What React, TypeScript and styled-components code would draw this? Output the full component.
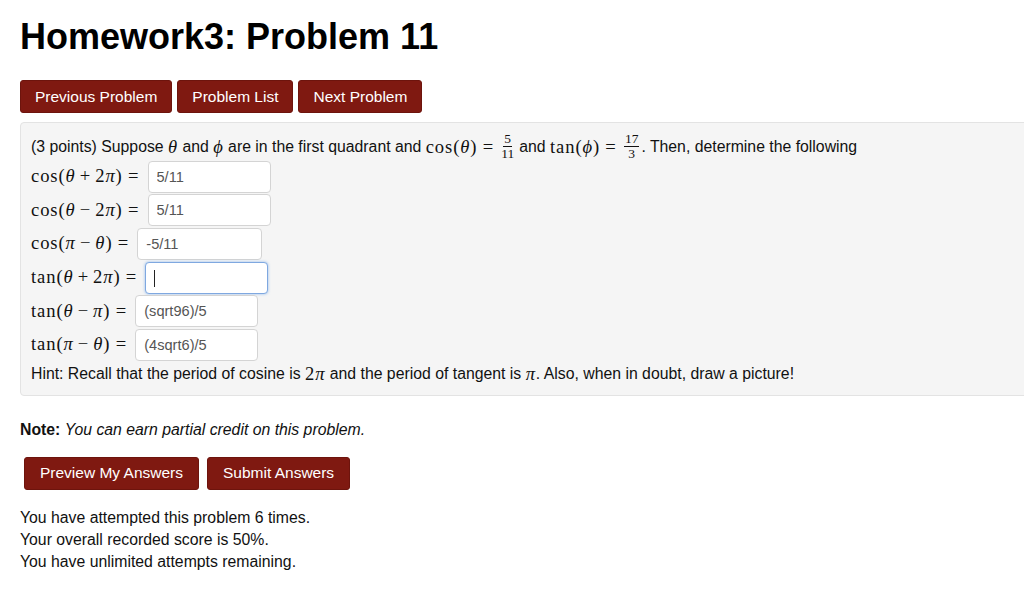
import React from 'react';
import styled, { createGlobalStyle, css } from 'styled-components';

const GlobalStyle = createGlobalStyle`
  html, body {
    margin: 0;
    padding: 0;
    background: #ffffff;
    overflow: hidden;
  }
  body {
    font-family: 'Liberation Sans', Arial, Helvetica, sans-serif;
    color: #111;
    font-size: 15.8px;
  }
`;

const Page = styled.div`
  padding: 0 0 0 20px;
`;

const Title = styled.h1`
  font-size: 36px;
  font-weight: bold;
  line-height: 40px;
  margin: 17px 0 23px;
  color: #000;
`;

const ButtonRow = styled.div<{ indent?: number }>`
  display: flex;
  gap: ${({ indent }) => (indent ? 8 : 5)}px;
  padding-left: ${({ indent }) => indent || 0}px;
`;

const RedButton = styled.button<{ $wide?: boolean }>`
  height: 33px;
  padding: 0 ${({ $wide }) => ($wide ? 15 : 14)}px;
  background: #7f1911;
  border: 1px solid #6d140d;
  border-radius: 3px;
  color: #fff;
  font-family: 'Liberation Sans', Arial, sans-serif;
  font-size: 15.5px;
  cursor: pointer;
`;

const Panel = styled.div`
  margin: 9px -12px 0 0;
  padding: 8px 10px 9px;
  background: #f5f5f5;
  border: 1px solid #e3e3e3;
  border-radius: 4px;
  line-height: 22px;
`;

const Intro = styled.div`
  display: flex;
  align-items: center;
  height: 27px;
  padding-top: 2px;
  white-space: pre;
`;

const mathFont = css`
  font-family: 'Liberation Serif', 'Times New Roman', serif;
  font-size: 18.6px;
  letter-spacing: 0.9px;
`;

const M = styled.span`
  ${mathFont}
`;

const Mi = styled.i`
  ${mathFont}
`;

const Op = styled.span<{ $rel?: boolean }>`
  ${mathFont}
  margin: 0 ${({ $rel }) => ($rel ? '0.28em' : '0.22em')};
`;

const Frac = styled.span<{ $after?: number }>`
  display: inline-flex;
  flex-direction: column;
  align-items: center;
  font-family: 'Liberation Serif', 'Times New Roman', serif;
  font-size: 13.5px;
  line-height: 12px;
  margin: 0 ${({ $after }) => $after || 0}px 0 2px;
  vertical-align: middle;
`;

const Num = styled.span`
  border-bottom: 1px solid #111;
  padding: 0 1px 1px;
`;

const Den = styled.span`
  padding-top: 1px;
`;

const AnswerRow = styled.div`
  display: flex;
  align-items: center;
  height: 33.6px;
`;

const Label = styled.span`
  white-space: pre;
  margin-right: 3px;
`;

const InputWrap = styled.span`
  position: relative;
  display: inline-flex;
`;

const Answer = styled.input<{ $w: number; $focused?: boolean }>`
  box-sizing: border-box;
  width: ${({ $w }) => $w}px;
  height: 32px;
  padding: 0 8px;
  border: 1px solid #d4d4d4;
  border-radius: 4px;
  background: #fff;
  color: #555;
  font-family: 'Liberation Sans', Arial, sans-serif;
  font-size: 14.6px;
  outline: none;
  ${({ $focused }) =>
    $focused &&
    css`
      border-color: #7fa8e0;
      box-shadow: 0 0 3px rgba(82, 148, 230, 0.6);
    `}
`;

const Caret = styled.span`
  position: absolute;
  left: 9px;
  top: 8px;
  width: 1px;
  height: 17px;
  background: #222;
`;

const Hint = styled.div`
  height: 24px;
  display: flex;
  align-items: center;
  white-space: pre;
`;

const Note = styled.p`
  margin: 25px 0 18px;
  b {
    font-weight: bold;
  }
  i {
    font-style: italic;
  }
`;

const Status = styled.div`
  margin-top: 17px;
  line-height: 22px;
`;

const rows = [
  { fn: 'cos', arg: <><Mi>θ</Mi><Op>+</Op><M>2</M><Mi>π</Mi></>, value: '5/11', w: 123 },
  { fn: 'cos', arg: <><Mi>θ</Mi><Op>−</Op><M>2</M><Mi>π</Mi></>, value: '5/11', w: 123 },
  { fn: 'cos', arg: <><Mi>π</Mi><Op>−</Op><Mi>θ</Mi></>, value: '-5/11', w: 125 },
  { fn: 'tan', arg: <><Mi>θ</Mi><Op>+</Op><M>2</M><Mi>π</Mi></>, value: '', w: 123, focused: true },
  { fn: 'tan', arg: <><Mi>θ</Mi><Op>−</Op><Mi>π</Mi></>, value: '(sqrt96)/5', w: 123 },
  { fn: 'tan', arg: <><Mi>π</Mi><Op>−</Op><Mi>θ</Mi></>, value: '(4sqrt6)/5', w: 123 },
];

export default function App() {
  return (
    <>
      <GlobalStyle />
      <Page>
        <Title>Homework3: Problem 11</Title>
        <ButtonRow>
          <RedButton>Previous Problem</RedButton>
          <RedButton>Problem List</RedButton>
          <RedButton>Next Problem</RedButton>
        </ButtonRow>

        <Panel>
          <Intro>
            (3 points) Suppose <Mi>θ</Mi> and <Mi>ϕ</Mi> are in the first quadrant and{' '}
            <M>cos(</M><Mi>θ</Mi><M>)</M><Op $rel>=</Op>
            <Frac $after={5}><Num>5</Num><Den>11</Den></Frac>and <M>tan(</M><Mi>ϕ</Mi><M>)</M><Op $rel>=</Op>
            <Frac $after={2}><Num>17</Num><Den>3</Den></Frac>. Then, determine the following
          </Intro>
          {rows.map((r, i) => (
            <AnswerRow key={i}>
              <Label>
                <M>{r.fn}(</M>
                {r.arg}
                <M>)</M>
                <Op $rel>=</Op>
              </Label>
              <InputWrap>
                <Answer $w={r.w} $focused={r.focused} defaultValue={r.value} readOnly />
                {r.focused && <Caret />}
              </InputWrap>
            </AnswerRow>
          ))}
          <Hint>
            Hint: Recall that the period of cosine is <M>2</M><Mi>π</Mi> and the period of tangent is{' '}
            <Mi>π</Mi>. Also, when in doubt, draw a picture!
          </Hint>
        </Panel>

        <Note>
          <b>Note:</b> <i>You can earn partial credit on this problem.</i>
        </Note>

        <ButtonRow indent={4}>
          <RedButton $wide>Preview My Answers</RedButton>
          <RedButton $wide>Submit Answers</RedButton>
        </ButtonRow>

        <Status>
          You have attempted this problem 6 times.
          <br />
          Your overall recorded score is 50%.
          <br />
          You have unlimited attempts remaining.
        </Status>
      </Page>
    </>
  );
}
